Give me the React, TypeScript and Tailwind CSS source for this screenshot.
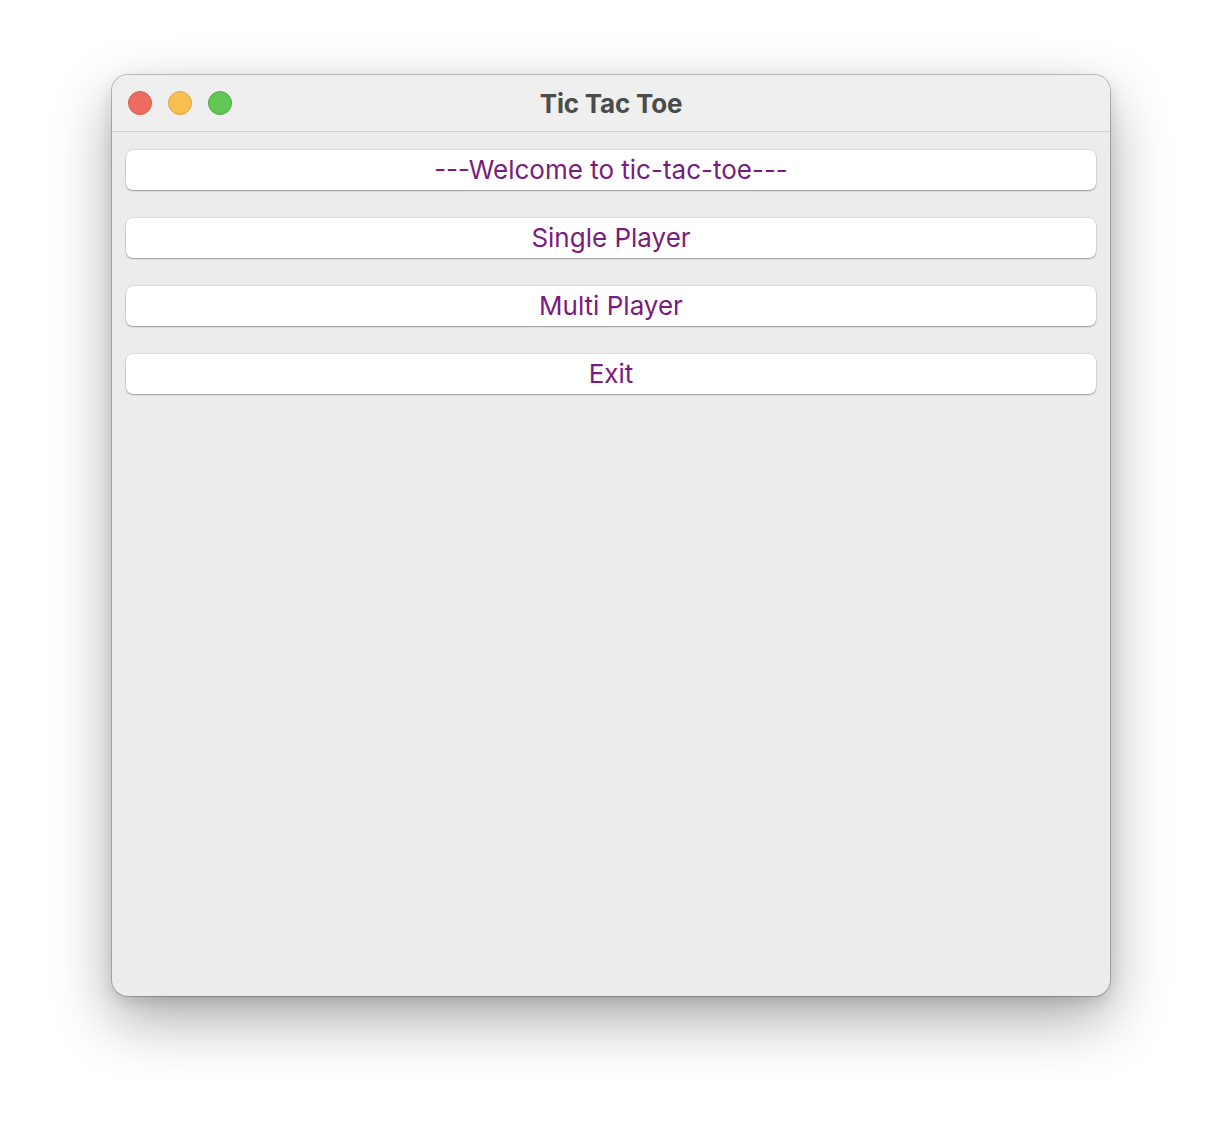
import React from "react";

const buttons = ["---Welcome to tic-tac-toe---", "Single Player", "Multi Player", "Exit"];

export default function App() {
  return (
    <div className="w-[1222px] h-[1144px] bg-white pt-[75px] pl-[112px] font-['Inter','Helvetica_Neue',sans-serif]">
      <div className="w-[998px] h-[921px] rounded-[16px] bg-[#ececec] overflow-hidden flex flex-col shadow-[0_0_0_1px_rgba(0,0,0,0.22),0_24px_60px_rgba(0,0,0,0.33),0_6px_16px_rgba(0,0,0,0.12)]">
        <div className="h-[57px] shrink-0 bg-[#efefef] border-b border-[#d0d0d0] flex items-center relative">
          <div className="flex gap-[16px] pl-[16px]">
            <span className="w-[24px] h-[24px] rounded-full bg-[#ee6b60] border border-[#d6574d]" />
            <span className="w-[24px] h-[24px] rounded-full bg-[#f6bf50] border border-[#dca53f]" />
            <span className="w-[24px] h-[24px] rounded-full bg-[#62c655] border border-[#4fa841]" />
          </div>
          <div className="absolute inset-0 flex items-center justify-center text-[26px] font-bold text-[#4b4b4b] tracking-[-0.2px]">
            Tic Tac Toe
          </div>
        </div>
        <div className="flex flex-col gap-[28px] px-[14px] pt-[18px]">
          {buttons.map((b) => (
            <div
              key={b}
              className="h-[40px] bg-white rounded-[7px] flex items-center justify-center text-[26px] leading-none text-[#7a1b7e] shadow-[0_0_0_0.5px_rgba(0,0,0,0.12),0_1px_1.5px_rgba(0,0,0,0.3)]"
            >
              {b}
            </div>
          ))}
        </div>
      </div>
    </div>
  );
}
